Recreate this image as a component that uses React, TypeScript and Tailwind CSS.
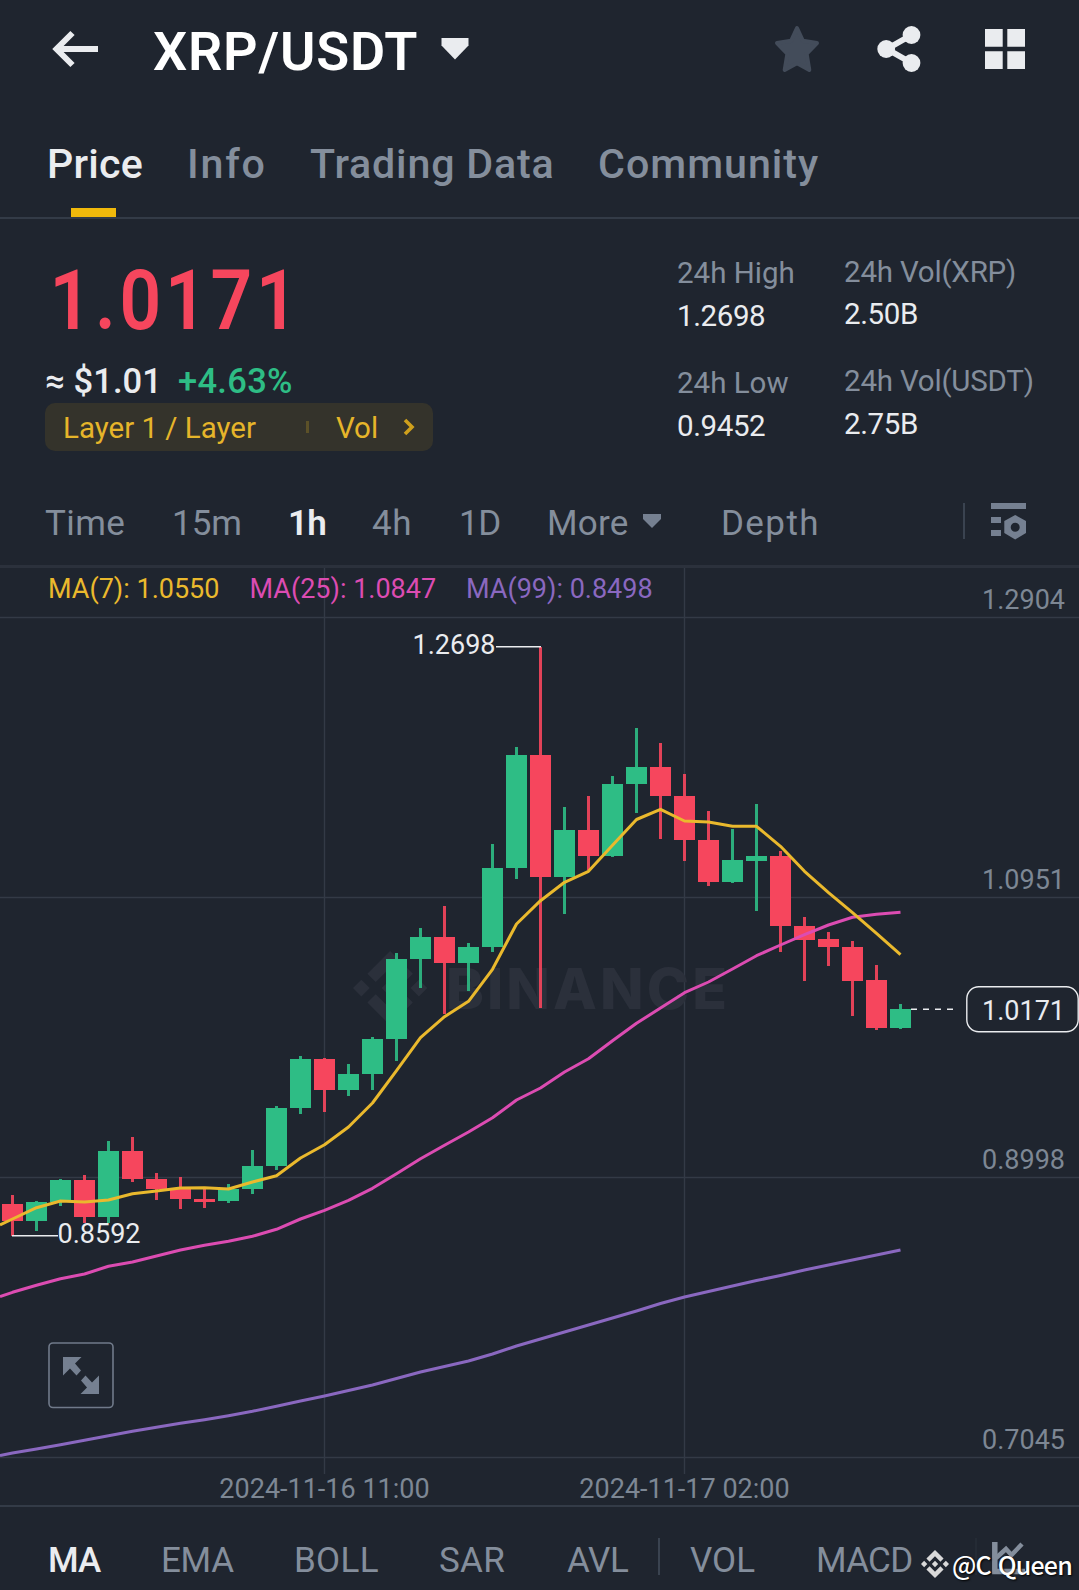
import React from 'react';
import clsx from 'clsx';

type Candle = [up: 0 | 1, high: number, top: number, bottom: number, low: number];

const STEP = 24;
const FIRST_X = 12.5;

const candles: Candle[] = [
  [0, 1195, 1204, 1221, 1236],
  [1, 1201, 1202, 1221, 1231],
  [1, 1179, 1180, 1202, 1206],
  [0, 1175, 1180, 1217, 1223],
  [1, 1141, 1151, 1217, 1223],
  [0, 1137, 1151, 1179, 1182],
  [0, 1173, 1179, 1189, 1200],
  [0, 1177, 1188, 1199, 1209],
  [0, 1189, 1199, 1202, 1208],
  [1, 1184, 1189, 1201, 1203],
  [1, 1150, 1166, 1189, 1194],
  [1, 1106, 1108, 1166, 1170],
  [1, 1056, 1059, 1108, 1114],
  [0, 1058, 1059, 1090, 1112],
  [1, 1064, 1074, 1090, 1096],
  [1, 1037, 1039, 1074, 1090],
  [1, 953, 959, 1039, 1061],
  [1, 928, 937, 959, 988],
  [0, 906, 937, 963, 1014],
  [1, 943, 947, 963, 991],
  [1, 844, 868, 947, 952],
  [1, 747, 755, 868, 879],
  [0, 647, 755, 877, 1008],
  [1, 807, 830, 877, 914],
  [0, 796, 830, 856, 870],
  [1, 776, 784, 856, 857],
  [1, 728, 767, 784, 813],
  [0, 743, 767, 796, 839],
  [0, 774, 796, 840, 861],
  [0, 811, 840, 882, 886],
  [1, 829, 860, 882, 883],
  [1, 804, 856, 861, 911],
  [0, 851, 856, 926, 952],
  [0, 917, 926, 940, 981],
  [0, 932, 939, 947, 966],
  [0, 941, 947, 981, 1016],
  [0, 965, 980, 1028, 1030],
  [1, 1004, 1009, 1028, 1029],
];

const ma7 = [
  1219, 1207.7, 1201, 1202, 1200, 1193.7, 1191, 1188, 1187.7, 1189, 1182, 1175.7, 1158, 1144.7,
  1127, 1103, 1070.7, 1037.7, 1016.7, 1001.3, 969.3, 924, 900.7, 882.3, 871.3, 845.3, 819.5, 809.3,
  821, 822, 826.3, 826.3, 846.3, 871.3, 892.7, 912.7, 933.3, 954.7,
];

const ma25 = [
  1292.3, 1285.3, 1278.7, 1274, 1266.3, 1262, 1256, 1250, 1245.3, 1241.3, 1236.3, 1229.3, 1219,
  1210.3, 1200.3, 1188.3, 1173.7, 1158.7, 1145.3, 1132, 1117.7, 1100, 1088, 1072, 1058.7, 1040.7,
  1023.3, 1008, 992.7, 982, 969, 955.7, 945, 934.7, 925, 917.3, 914.3, 912.3,
];

const ma99 = [
  1453, 1449, 1444.7, 1440.3, 1435.7, 1431.3, 1427.3, 1423.3, 1419.7, 1415.7, 1411.3, 1406.3, 1401,
  1396, 1390.5, 1385, 1378.5, 1372, 1366.5, 1361, 1354, 1346, 1339, 1332, 1325, 1318, 1311, 1303.5,
  1297, 1291.5, 1286, 1280.5, 1275.5, 1270, 1265, 1260, 1255, 1250,
];

const priceLabels = [
  { y: 617.5, text: '1.2904' },
  { y: 897.5, text: '1.0951' },
  { y: 1177.5, text: '0.8998' },
  { y: 1457.5, text: '0.7045' },
];

const tabs = [
  { label: 'Price', className: 'w-[93px] tracking-[0.2px]' },
  { label: 'Info', className: 'w-[77px] pl-[1px] tracking-[1.8px]' },
  { label: 'Trading Data', className: 'w-[242px] pl-[1px] tracking-[0.8px]' },
  { label: 'Community', className: 'w-[220px] pl-[1px] tracking-[1px]' },
];

const linePoints = (startY: number, values: number[]) =>
  [`0,${startY}`, ...values.map((y, i) => `${FIRST_X + i * STEP},${y}`)].join(' ');

function BinanceLogo() {
  return (
    <path d="M16 0l9.8 9.8-3.6 3.6L16 7.2l-6.2 6.2-3.6-3.6L16 0zM3.6 12.4L7.2 16l-3.6 3.6L0 16l3.6-3.6zM16 12.4l3.6 3.6-3.6 3.6-3.6-3.6 3.6-3.6zM28.4 12.4L32 16l-3.6 3.6-3.6-3.6 3.6-3.6zM9.8 18.6l6.2 6.2 6.2-6.2 3.6 3.6L16 32l-9.8-9.8 3.6-3.6z" />
  );
}

function Header() {
  return (
    <header className="flex h-[98px] items-center pl-[52px]">
      <svg className="h-[38px] w-[47px]" viewBox="0 0 47 38" fill="none" stroke="#eaecef" strokeWidth={6}>
        <path d="M5 19H46" />
        <path d="M20.5 3L4.5 19L20.5 35" />
      </svg>
      <h1 className="ml-[54px] w-[265px] whitespace-nowrap pt-[5px] text-[54px] font-semibold leading-[60px] tracking-[0.8px] text-white">
        XRP/USDT
      </h1>
      <svg className="ml-[23px] h-[22px] w-[28px]" viewBox="0 0 28 22" fill="#eaecef">
        <path d="M0.5 0H27.5V7.5L14 21.5L0.5 7.5Z" />
      </svg>
      <svg className="ml-[305px] h-[48px] w-[46px]" viewBox="0 0 46 46" preserveAspectRatio="none">
        <path
          d="M23 3L28.9 15.2L43 17.2L32.6 27.5L35.3 43L23 36.6L10.7 43L13.4 27.5L3 17.2L17.1 15.2Z"
          fill="#434c5a"
          stroke="#434c5a"
          strokeWidth={4}
          strokeLinejoin="round"
        />
      </svg>
      <svg className="ml-[57px] h-[46px] w-[44px]" viewBox="0 0 44 46" fill="#eaecef">
        <path d="M34.5 9L10 23L34.5 37" fill="none" stroke="#eaecef" strokeWidth={6} />
        <circle cx="9.2" cy="23" r="8.9" />
        <circle cx="34.5" cy="9" r="8.9" />
        <circle cx="34.5" cy="37" r="8.9" />
      </svg>
      <svg className="ml-[64px] h-[40px] w-[40px]" viewBox="0 0 40 40" fill="#eaecef">
        <path d="M0 0H17.7V17.7H0ZM22.3 0H40V17.7H22.3ZM0 22.3H17.7V40H0ZM22.3 22.3H40V40H22.3Z" />
      </svg>
    </header>
  );
}

function Tabs() {
  return (
    <nav className="flex h-[121px] items-end gap-[46px] border-b-2 border-[#333b47] pl-[47px]">
      {tabs.map((tab, i) => (
        <div key={tab.label} className="flex flex-col items-center gap-5">
          <span
            className={clsx(
              'whitespace-nowrap text-[41.2px] font-medium leading-[48px]',
              i === 0 ? 'text-[#eaecef]' : 'text-[#848e9c]',
              tab.className,
            )}
          >
            {tab.label}
          </span>
          <span className={clsx('h-[9px] w-[45px]', i === 0 && 'bg-[#f0b90b]')} />
        </div>
      ))}
    </nav>
  );
}

function Summary() {
  return (
    <section className="flex h-[261px]">
      <div className="w-[633px] pl-[45px] pt-[40px]">
        <p className="origin-left scale-x-[0.88] pl-[5px] text-[83px] font-semibold leading-[84px] tracking-[4.3px] text-[#f6465d]">
          1.0171
        </p>
        <p className="mt-4 flex whitespace-nowrap text-[34.5px] font-medium leading-[44px]">
          <span className="w-[133px] tracking-[0.1px] text-[#eaecef]">≈ $1.01</span>
          <span className="tracking-[0.3px] text-[#2ebd85]">+4.63%</span>
        </p>
        <div className="flex h-12 w-[388px] items-center whitespace-nowrap rounded-[10px] bg-[#34332b] pl-[18px] text-[29.5px] leading-[48px] text-[#e6b52a]">
          <span className="w-[243px] pt-px">Layer 1 / Layer</span>
          <span className="h-[12px] w-[3px] bg-[#5c5128]" />
          <span className="ml-[27px] w-[67px] pt-px">Vol</span>
          <svg className="h-[18px] w-[12px]" viewBox="0 0 12 18" fill="none" stroke="#cfa01c" strokeWidth={3.6}>
            <path d="M2 2L9 9L2 16" />
          </svg>
        </div>
      </div>
      <div className="flex whitespace-nowrap pl-[44px] text-[29.5px] leading-[36px]">
        <dl className="w-[167px] pt-[36px]">
          <dt className="text-[#848e9c]">24h High</dt>
          <dd className="mt-[7px] tracking-[-0.4px] text-[#eaecef]">1.2698</dd>
          <dt className="mt-[31px] text-[#848e9c]">24h Low</dt>
          <dd className="mt-[7px] tracking-[-0.4px] text-[#eaecef]">0.9452</dd>
        </dl>
        <dl className="pt-[35px]">
          <dt className="tracking-[-0.2px] text-[#848e9c]">24h Vol(XRP)</dt>
          <dd className="mt-[6px] tracking-[-0.4px] text-[#eaecef]">2.50B</dd>
          <dt className="mt-[31px] tracking-[-0.2px] text-[#848e9c]">24h Vol(USDT)</dt>
          <dd className="mt-[7px] tracking-[-0.4px] text-[#eaecef]">2.75B</dd>
        </dl>
      </div>
    </section>
  );
}

function Intervals() {
  return (
    <div className="flex h-[88px] items-center whitespace-nowrap border-b-[3px] border-[#2b313c] pl-[45px] pt-[2px] text-[35px] leading-[42px] text-[#848e9c]">
      <span className="w-[127px] tracking-[0.4px]">Time</span>
      <span className="w-[116px]">15m</span>
      <span className="w-[84px] font-semibold tracking-[-0.8px] text-[#eaecef]">1h</span>
      <span className="w-[87px] tracking-[0.6px]">4h</span>
      <span className="w-[88px] tracking-[-0.4px]">1D</span>
      <span className="w-[96px] tracking-[0.2px]">More</span>
      <svg className="mb-[6px] h-[14px] w-[18px]" viewBox="0 0 18 14" fill="#758091">
        <path d="M0 0H18V5L9 14L0 5Z" />
      </svg>
      <span className="ml-[60px] w-[242px] tracking-[1.4px]">Depth</span>
      <span className="mb-[6px] h-[36px] w-[2px] bg-[#3a4350]" />
      <svg className="mb-[4px] ml-[26px] h-[37px] w-[36px]" viewBox="0 0 36 37" fill="#758091">
        <path d="M0 0H35V6H0ZM0 14H10V20H0ZM0 27H10V33H0Z" />
        <path
          fillRule="evenodd"
          d="M24.2 12L35 18V30L24.2 36.5L13.3 30V18ZM24.2 19.7A4.5 4.5 0 1 0 24.2 28.7A4.5 4.5 0 1 0 24.2 19.7Z"
        />
      </svg>
    </div>
  );
}

function Chart() {
  return (
    <svg className="block h-[937px] w-[1079px]" viewBox="0 568 1079 937" fontSize={27}>
      <g stroke="#333a46" strokeWidth={1.4}>
        {priceLabels.map(({ y }) => (
          <path key={y} d={`M0 ${y}H1079`} />
        ))}
        <path d="M324.5 568V1474M684.5 568V1474" />
      </g>

      <g fill="#2b303b">
        <g transform="translate(353 951) scale(2.32)">
          <BinanceLogo />
        </g>
        <text x="446" y="1008.5" fontSize={57} fontWeight={800} fontFamily="Inter" textLength="281">
          BINANCE
        </text>
      </g>

      {candles.map(([up, high, top, bottom, low], i) => (
        <g key={i} fill={up ? '#2ebd85' : '#f6465d'}>
          <rect x={FIRST_X + i * STEP - 1.5} y={high} width={3} height={low - high} opacity={0.9} />
          <rect x={FIRST_X + i * STEP - 10.5} y={top} width={21} height={bottom - top} />
        </g>
      ))}

      <g fill="none" strokeWidth={3} strokeLinejoin="round">
        <polyline points={linePoints(1455.5, ma99)} stroke="#8a68c0" />
        <polyline points={linePoints(1296.5, ma25)} stroke="#dc4cb2" />
        <polyline points={linePoints(1225, ma7)} stroke="#eab92d" />
      </g>

      <text x="48" y="598" fill="#eab92d">MA(7): 1.0550</text>
      <text x="249.5" y="598" fill="#dc4cb2">MA(25): 1.0847</text>
      <text x="466" y="598" fill="#8a68c0">MA(99): 0.8498</text>

      <g fill="#7d8794">
        {priceLabels.map(({ y, text }) => (
          <text key={text} x="1065" y={y - 8.5} textAnchor="end">
            {text}
          </text>
        ))}
        <text x="324.5" y="1498" textAnchor="middle">2024-11-16 11:00</text>
        <text x="684.5" y="1498" textAnchor="middle">2024-11-17 02:00</text>
      </g>

      <g fill="#eaecef">
        <text x="412.5" y="654">1.2698</text>
        <text x="57.5" y="1243">0.8592</text>
        <text x="982" y="1020">1.0171</text>
      </g>
      <g fill="none" stroke="#eaecef" strokeWidth={1.4}>
        <path d="M496 646.7H541M12 1235.7H58" />
        <path d="M911 1009.3H953" strokeDasharray="6 6" />
        <rect x="966.8" y="986.8" width="111.4" height="45" rx="12" />
      </g>

      <rect x="49" y="1343" width="64" height="64.5" rx="4" fill="none" stroke="#707a8a" strokeWidth={1.6} />
      <g fill="#758091">
        <path d="M63 1357H81.5L75 1363.6L81 1370.5L76.5 1375.5L70 1368.5L63 1375.5Z" />
        <path d="M99 1394H80.5L87 1387.4L81 1380.5L85.5 1375.5L92 1382.5L99 1375.5Z" />
      </g>
    </svg>
  );
}

function Indicators() {
  return (
    <footer className="relative flex h-[85px] items-center overflow-hidden whitespace-nowrap border-t-2 border-[#333b47] pl-[48px] pt-[24px] text-[35px] leading-[42px] text-[#848e9c]">
      <span className="w-[113px] font-medium tracking-[-0.8px] text-[#eaecef]">MA</span>
      <span className="w-[133px] tracking-[-0.3px]">EMA</span>
      <span className="w-[145px] tracking-[0.3px]">BOLL</span>
      <span className="w-[128px] tracking-[0.3px]">SAR</span>
      <span className="w-[91px] tracking-[-0.3px]">AVL</span>
      <span className="mb-[9px] h-[37px] w-[2px] bg-[#3a4350]" />
      <span className="ml-[30px] w-[126px]">VOL</span>
      <span className="w-[159px] tracking-[-0.7px]">MACD</span>
      <span className="mb-[9px] h-[37px] w-[2px] bg-[#242b35]" />
      <svg className="mb-[6px] ml-[15px] h-[34px] w-[34px]" viewBox="0 0 34 34" fill="none" stroke="#848e9c">
        <path d="M2.8 1V30.5H33" strokeWidth={5.5} />
        <path d="M4 17L14 8L19.5 14L30 3" strokeWidth={4.5} />
      </svg>
      <div className="absolute left-[921px] top-[43px] flex items-center text-white">
        <svg className="h-[28px] w-[28px]" viewBox="0 0 32 32" fill="#d9d9d9">
          <BinanceLogo />
        </svg>
        <span className="ml-[3px] font-['Noto_Sans_CJK_SC',sans-serif] text-[25px] font-medium leading-[28px] tracking-[-0.8px] [text-shadow:1px_1px_2px_#000] [word-spacing:2px]">
          @C Queen
        </span>
      </div>
    </footer>
  );
}

export default function App() {
  return (
    <main className="h-[1590px] w-[1079px] overflow-hidden bg-[#1f252f] font-['Roboto',sans-serif]">
      <Header />
      <Tabs />
      <Summary />
      <Intervals />
      <Chart />
      <Indicators />
    </main>
  );
}
